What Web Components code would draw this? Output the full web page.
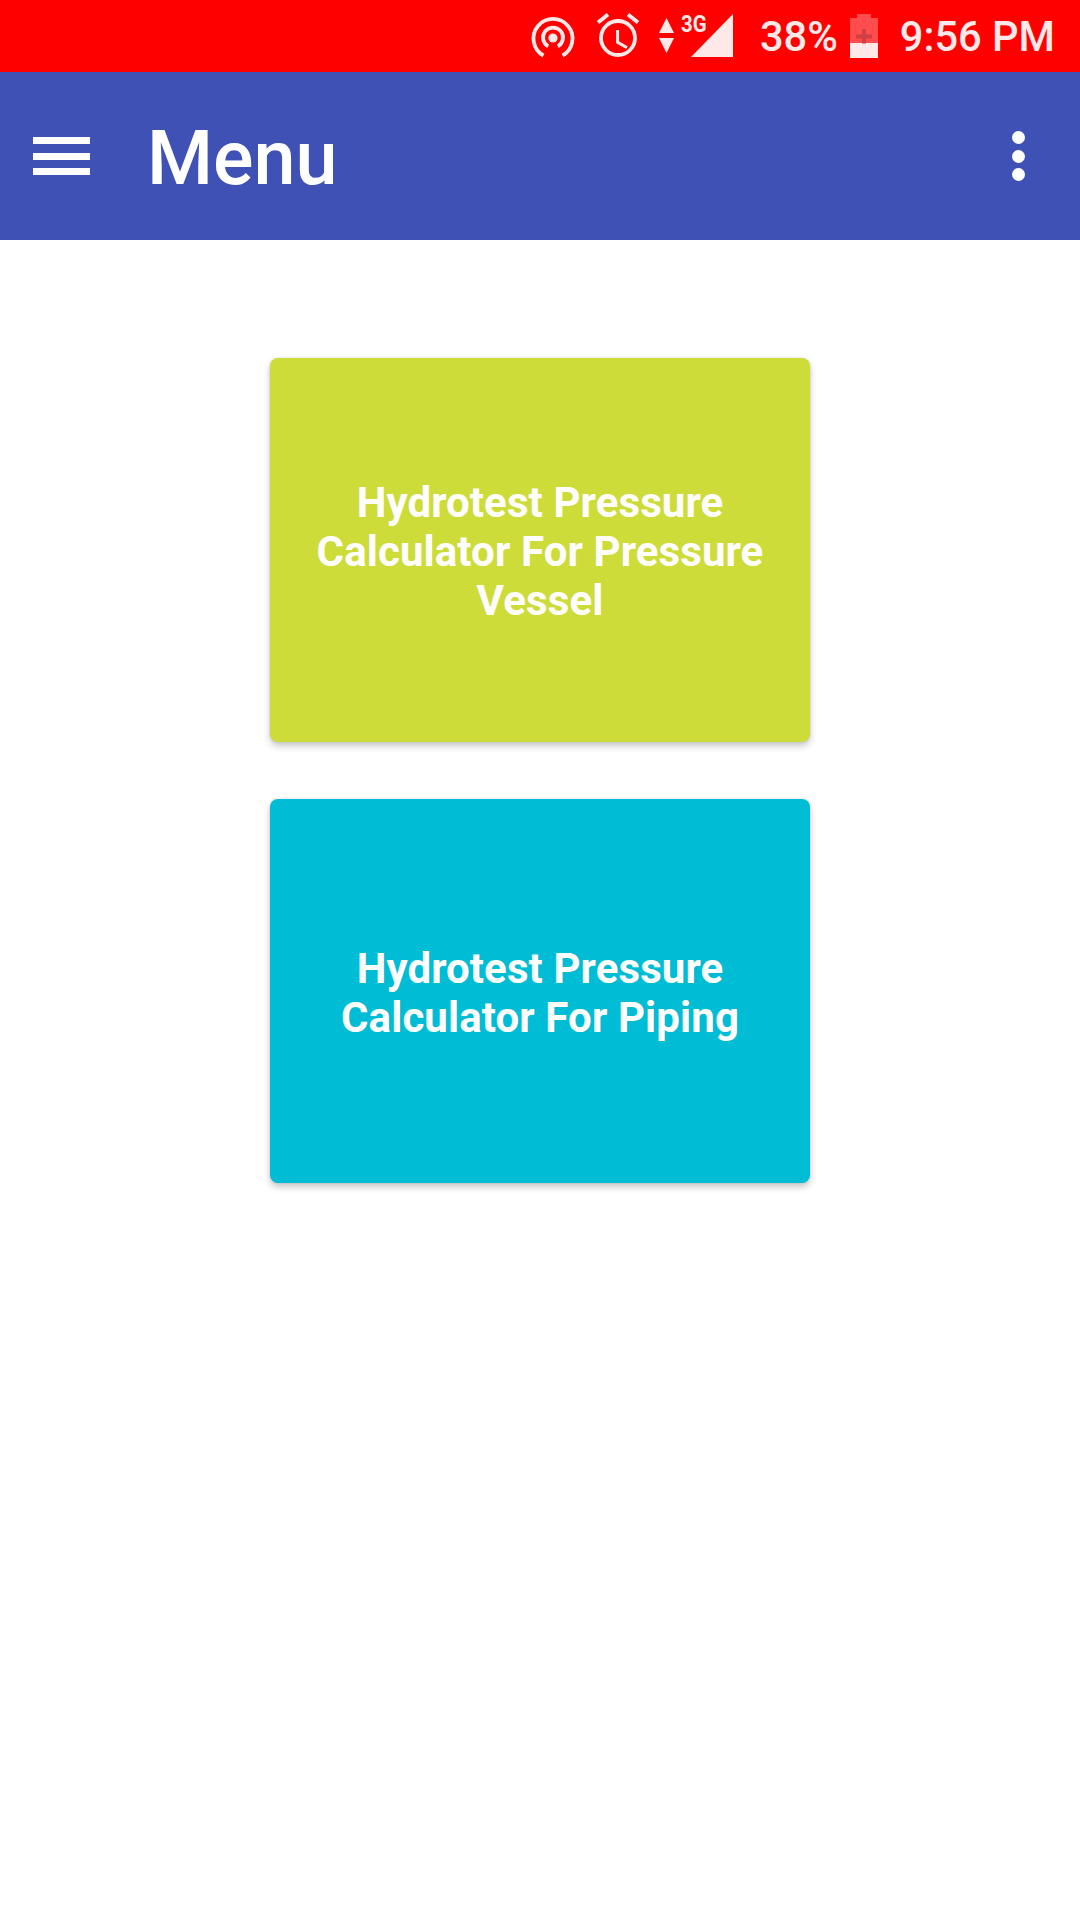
<!DOCTYPE html>
<html><head><meta charset="utf-8">
<style>
html,body{margin:0;padding:0;background:#fff;width:1080px;height:1920px;overflow:hidden;font-family:Roboto,"Liberation Sans",sans-serif}
</style></head>
<body>
<app-screen>
  <status-bar battery="38%" time="9:56 PM"></status-bar>
  <app-bar title="Menu"></app-bar>
  <menu-list>
    <menu-card color="#CDDC39">Hydrotest Pressure Calculator For Pressure Vessel</menu-card>
    <menu-card color="#00BCD4">Hydrotest Pressure Calculator For Piping</menu-card>
  </menu-list>
</app-screen>
<script>
function def(name, html, init){
  customElements.define(name, class extends HTMLElement{
    constructor(){super();this.attachShadow({mode:'open'}).innerHTML=html;}
    connectedCallback(){ if(init) init(this,this.shadowRoot); }
  });
}
def('app-screen',`<style>:host{display:flex;flex-direction:column;width:1080px;height:1920px;background:#fff}</style><slot></slot>`);

const ink='#FFE8E8';
def('status-bar',`<style>
:host{display:flex;align-items:center;justify-content:flex-end;height:72px;background:#FF0000;color:${ink};padding-right:25px;box-sizing:border-box;font:500 41.6px Roboto,sans-serif;flex:none}
svg{display:block;flex:none;overflow:visible}
.txt{line-height:72px;white-space:nowrap;position:relative;top:1px}
.net{position:relative;display:block;width:76px;height:72px;margin-left:17px;flex:none}
.net svg{position:absolute;left:0;top:0}
.g{position:absolute;left:23px;top:10px;font:700 24px/28px Roboto,sans-serif;transform:scaleX(.85);transform-origin:0 0;white-space:nowrap}
</style>
<svg width="48" height="72" viewBox="0 0 48 72" fill="none" stroke="${ink}" stroke-width="3.8">
  <circle cx="24" cy="38" r="4.6" fill="${ink}" stroke="none"/>
  <path d="M14.5 55.5A19.5 19.5 0 1 1 33.5 55.5"/>
  <path d="M19.2 46.3A10 10 0 1 1 28.8 46.3"/>
</svg>
<svg style="margin-left:18px" width="46" height="72" viewBox="0 0 46 72" fill="none" stroke="${ink}" stroke-width="3.8">
  <circle cx="23" cy="38" r="17"/>
  <path d="M22.6 30V42.4L32 47.6" stroke-width="3"/>
  <path d="M3 22.5L13 14.5M33 14.5L43 22.5" stroke-width="4"/>
</svg>
<span class="net">
  <svg width="76" height="72" viewBox="0 0 76 72" fill="${ink}">
    <path d="M8.5 18L16 33H1Z"/><path d="M1 38H16L8.5 53Z"/>
    <path d="M33 57L75 14V57Z"/>
  </svg>
  <span class="g">3G</span>
</span>
<span class="txt" style="margin-left:26px">38%</span>
<svg style="margin-left:12px" width="28" height="72" viewBox="0 0 28 72">
  <path d="M7 14H21V18H28V43H0V18H7Z" fill="#FFF" fill-opacity=".3"/>
  <rect x="0" y="43" width="28" height="15" fill="${ink}"/>
  <path d="M12 29H16V34.5H22V38.5H16V44H12V38.5H6V34.5H12Z" fill="#802838" fill-opacity=".38"/>
</svg>
<span class="txt" style="margin-left:22px" id="t">9:56 PM</span>`);

def('app-bar',`<style>
:host{display:flex;align-items:center;height:168px;background:#3F51B5;color:#fff;flex:none}
.menu{width:57px;margin-left:33px;display:flex;flex-direction:column;gap:8.5px;flex:none}
.menu i{display:block;height:7px;background:#fff}
h1{margin:0 0 0 57px;padding-top:5px;font:500 75.5px/163px Roboto,sans-serif;flex:1}
.more{width:13px;margin-right:55px;display:flex;flex-direction:column;gap:5.5px;flex:none}
.more i{display:block;width:13px;height:13px;border-radius:50%;background:#fff}
</style>
<div class="menu"><i></i><i></i><i></i></div>
<h1 id="h"></h1>
<div class="more"><i></i><i></i><i></i></div>`,(el,s)=>{s.getElementById('h').textContent=el.getAttribute('title');});

def('menu-list',`<style>:host{display:flex;flex-direction:column;align-items:center;gap:57px;padding-top:118px}</style><slot></slot>`);

def('menu-card',`<style>
:host{display:flex;align-items:center;justify-content:center;box-sizing:border-box;width:540px;height:384px;border-radius:8px;box-shadow:0 4px 7px rgba(0,0,0,.22),0 0 3px rgba(0,0,0,.1);padding:3px 42px 0;color:#fff;text-align:center;font:700 42px/49px Roboto,sans-serif;letter-spacing:.1px}
</style><slot></slot>`,(el)=>{el.style.background=el.getAttribute('color');});
</script>
</body></html>
